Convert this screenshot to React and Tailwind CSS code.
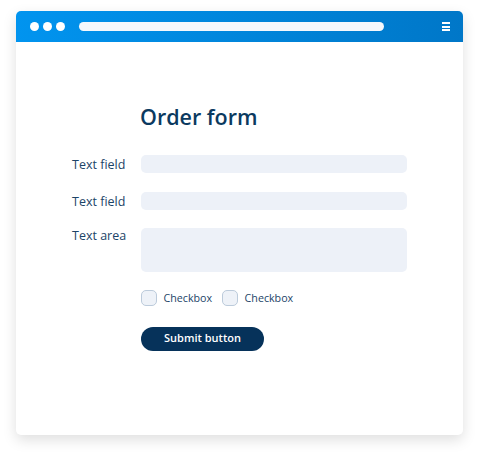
export default function App() {
  const font = { fontFamily: '"Open Sans", "Noto Sans", sans-serif' };
  return (
    <div className="w-[480px] h-[457px] bg-white" style={font}>
      <div className="pt-[11px] pl-[16px]">
        <div className="w-[447px] h-[424px] bg-white rounded-[5px] shadow-[0_5px_14px_rgba(0,0,0,0.13)] flex flex-col">
          <div className="h-[31px] rounded-t-[5px] bg-gradient-to-r from-[#0194ef] to-[#0077c8] flex items-center pl-[14px] pr-[13px]">
            <div className="flex gap-[4px]">
              <div className="w-[9px] h-[9px] rounded-full bg-white" />
              <div className="w-[9px] h-[9px] rounded-full bg-white" />
              <div className="w-[9px] h-[9px] rounded-full bg-white" />
            </div>
            <div className="ml-[14px] w-[305px] h-[9px] rounded-full bg-[#f5f8fc]" />
            <div className="ml-auto flex flex-col gap-[1.5px] w-[8px]">
              <div className="h-[2px] bg-white" />
              <div className="h-[2px] bg-white" />
              <div className="h-[2px] bg-white" />
            </div>
          </div>
          <div className="flex-1 pt-[61px] pl-[56px]">
            <div className="grid grid-cols-[53px_266px] gap-x-[16px] items-start">
              <div />
              <h1 className="text-[21.5px] leading-[28px] font-semibold text-[#0b3a5f] -ml-[1px]">Order form</h1>

              <div className="col-span-2 h-[24px]" />

              <label className="mt-[1px] -mb-[1px] text-[12.5px] leading-[18px] text-[#1c4468] text-right whitespace-nowrap">Text field</label>
              <div className="h-[18px] rounded-[5px] bg-[#edf1f8]" />

              <div className="col-span-2 h-[18.5px]" />

              <label className="mt-[1px] -mb-[1px] text-[12.5px] leading-[18px] text-[#1c4468] text-right whitespace-nowrap">Text field</label>
              <div className="h-[18px] rounded-[5px] bg-[#edf1f8]" />

              <div className="col-span-2 h-[18px]" />

              <label className="-mt-[1px] text-[12.5px] leading-[18px] text-[#1c4468] text-right whitespace-nowrap">Text area</label>
              <div className="h-[44px] rounded-[5px] bg-[#edf1f8]" />

              <div className="col-span-2 h-[18px]" />

              <div />
              <div className="flex items-center">
                <div className="w-[16px] h-[16px] rounded-[5px] border border-[#bccbdb] bg-[#eef2f8]" />
                <span className="ml-[6.5px] text-[10.7px] leading-[16px] text-[#1c4468]">Checkbox</span>
                <div className="ml-[10px] w-[16px] h-[16px] rounded-[5px] border border-[#bccbdb] bg-[#eef2f8]" />
                <span className="ml-[6.5px] text-[10.7px] leading-[16px] text-[#1c4468]">Checkbox</span>
              </div>

              <div className="col-span-2 h-[21px]" />

              <div />
              <div>
                <button className="w-[123px] h-[24px] rounded-full bg-[#06325a] text-white text-[11px] font-semibold flex items-center justify-center">
                  Submit button
                </button>
              </div>
            </div>
          </div>
        </div>
      </div>
    </div>
  );
}
